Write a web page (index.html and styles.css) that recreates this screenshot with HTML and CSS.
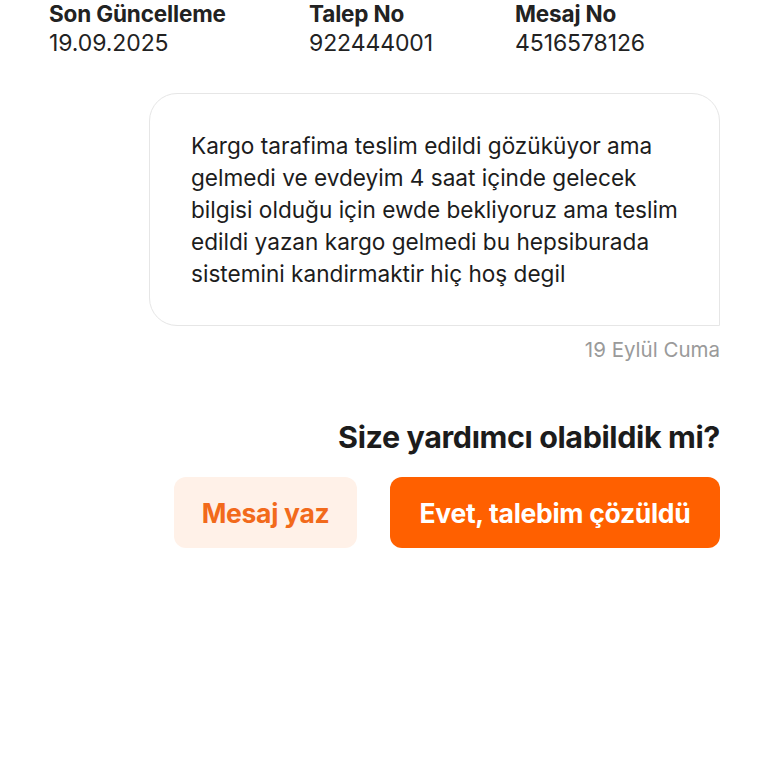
FILE: index.html
```html
<!DOCTYPE html>
<html lang="tr">
<head>
<meta charset="utf-8">
<link rel="stylesheet" href="styles.css">
</head>
<body>
<div class="page">
  <div class="meta">
    <div class="meta-col c1">
      <div class="meta-label">Son Güncelleme</div>
      <div class="meta-value">19.09.2025</div>
    </div>
    <div class="meta-col c2">
      <div class="meta-label">Talep No</div>
      <div class="meta-value">922444001</div>
    </div>
    <div class="meta-col c3">
      <div class="meta-label">Mesaj No</div>
      <div class="meta-value">4516578126</div>
    </div>
  </div>
  <div class="bubble-wrap">
    <div class="bubble">Kargo tarafima teslim edildi gözüküyor ama gelmedi ve evdeyim 4 saat içinde gelecek bilgisi olduğu için ewde bekliyoruz ama teslim edildi yazan kargo gelmedi bu hepsiburada sistemini kandirmaktir hiç hoş degil</div>
    <div class="date">19 Eylül Cuma</div>
  </div>
  <div class="feedback">
    <div class="question">Size yardımcı olabildik mi?</div>
    <div class="actions">
      <button class="btn btn-light">Mesaj yaz</button>
      <button class="btn btn-primary">Evet, talebim çözüldü</button>
    </div>
  </div>
</div>
</body>
</html>
```
FILE: styles.css
```css
html, body {
  margin: 0;
  padding: 0;
  background: #ffffff;
}
body {
  font-family: Inter, "Noto Sans", sans-serif;
  color: #1a1a1a;
}
.page {
  width: 768px;
  padding: 0 48px 0 49px;
  box-sizing: border-box;
}
.meta {
  display: flex;
}
.meta-col.c1 { width: 260px; }
.meta-col.c2 { width: 206px; }
.meta-label {
  font-weight: 700;
  font-size: 22.5px;
  line-height: 27px;
  color: #222;
  letter-spacing: -0.15px;
}
.meta-value {
  font-size: 23px;
  line-height: 33px;
  color: #222;
  letter-spacing: -0.1px;
}
.bubble-wrap {
  margin-top: 33px;
  display: flex;
  flex-direction: column;
  align-items: flex-end;
}
.bubble {
  box-sizing: border-box;
  width: 571px;
  height: 233px;
  border: 1px solid #e6e6e6;
  border-radius: 28px 28px 0 28px;
  padding: 36px 30px 0 41px;
  font-size: 22.6px;
  line-height: 32px;
  color: #1c1c1c;
}
.date {
  margin-top: 11px;
  font-size: 20.5px;
  line-height: 26px;
  color: #9a9a9a;
}
.feedback {
  margin-top: 56px;
  display: flex;
  flex-direction: column;
  align-items: flex-end;
}
.question {
  font-weight: 700;
  font-size: 30.5px;
  line-height: 36px;
  color: #1c1c1c;
  letter-spacing: -0.4px;
}
.actions {
  margin-top: 22px;
  display: flex;
  gap: 33px;
}
.btn {
  border: none;
  font-family: Inter, sans-serif;
  font-weight: 700;
  font-size: 26.5px;
  height: 71px;
  border-radius: 12px;
  cursor: pointer;
  letter-spacing: -0.3px;
  padding: 0;
}
.btn-light {
  width: 183px;
  background: #fff1e8;
  color: #f26a1b;
}
.btn-primary {
  width: 330px;
  background: #ff6000;
  color: #ffffff;
}
```
